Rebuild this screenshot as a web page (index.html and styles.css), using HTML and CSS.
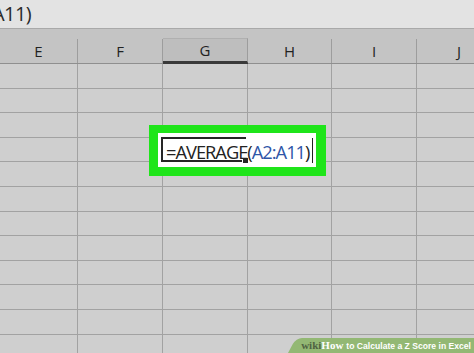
FILE: index.html
```html
<!DOCTYPE html>
<html>
	<head>
		<title>Calculate a Z Score in Excel</title>
		<link rel="stylesheet" href="styles.css">
	</head>
	<body>
		<div class="formula-bar"><span class="formula-text">A11)</span></div>

		<div class="sheet">
			<div class="col-head"><span>E</span></div>
			<div class="col-head"><span>F</span></div>
			<div class="col-head active"><span>G</span></div>
			<div class="col-head"><span>H</span></div>
			<div class="col-head"><span>I</span></div>
			<div class="col-head last"><span>J</span></div>
		</div>
		<div class="sheet rows" id="rows"></div>

		<div class="highlight">
			<div class="cell-outline"><i class="fill-handle"></i></div>
			<span class="entry">=AVERAGE(<span class="ref">A2:A11</span>)</span>
			<i class="caret"></i>
		</div>

		<div class="watermark">
			<div class="watermark-bg"></div>
			<span class="wh-wiki">wiki</span><span class="wh-how">How</span>
			<span class="wh-title">to Calculate a Z Score in Excel</span>
		</div>

		<script>
			var rows = document.getElementById("rows");
			for (var i = 0; i < 12 * 6; i++) {
				var cell = document.createElement("div");
				cell.className = "cell";
				rows.appendChild(cell);
			}
		</script>
	</body>
</html>
```

FILE: styles.css
```css
body {
	margin: 0;
	width: 474px;
	height: 353px;
	overflow: hidden;
	position: relative;
	background: #cfcfcf;
	font-family: "Open Sans", "Liberation Sans", sans-serif;
}

.formula-bar {
	height: 28px;
	background: #e3e3e3;
	border-bottom: 1px solid #a9a9a9;
	overflow: hidden;
}
.formula-text {
	display: block;
	margin-left: -8px;
	padding-top: 0;
	font-size: 20px;
	color: #2a2a2a;
	letter-spacing: -0.6px;
}

.sheet {
	display: grid;
	grid-template-columns: 78px 85px 85px 84px 85px 1fr;
}

.col-head {
	height: 35px;
	box-sizing: border-box;
	padding-top: 10px;
	background: #c4c4c4;
	border-bottom: 1px solid #8f8f8f;
}
.col-head > span {
	display: flex;
	align-items: center;
	justify-content: center;
	height: 24px;
	box-sizing: border-box;
	border-right: 1px solid #9d9d9d;
	font-size: 15px;
	color: #222;
}
.col-head.last > span {
	border-right: none;
	justify-content: flex-end;
	padding-right: 13px;
}
.col-head.active > span {
	background: #bebebe;
	border-top: 1px solid #b0b0b0;
	border-bottom: 2px solid #3a3a3a;
	height: 25px;
	margin-top: -1px;
}
.col-head.active {
	border-bottom-color: #3a3a3a;
}

.rows {
	grid-auto-rows: 24.6px;
}
.cell {
	box-sizing: border-box;
	border-right: 1px solid #a2a2a2;
	border-bottom: 1px solid #a2a2a2;
}
.cell:nth-child(6n) {
	border-right: none;
}

.highlight {
	position: absolute;
	left: 149px;
	top: 125px;
	width: 158px;
	height: 34px;
	border: 9px solid #1fe51a;
	border-top-width: 8px;
	border-right-width: 10px;
	background: #fff;
	display: flex;
	align-items: center;
}
.cell-outline {
	position: absolute;
	left: 3px;
	top: 4px;
	width: 83px;
	height: 21px;
	border: 2px solid #262626;
	border-right: none;
}
.fill-handle {
	position: absolute;
	right: -3px;
	bottom: -4px;
	width: 5px;
	height: 5px;
	background: #262626;
	border: 1px solid #fff;
}
.entry {
	position: relative;
	margin-left: 8px;
	margin-top: 2px;
	font-size: 18.3px;
	letter-spacing: -1px;
	color: #232323;
	white-space: nowrap;
}
.ref {
	color: #2f56a8;
}
.caret {
	position: relative;
	margin-left: 3px;
	margin-top: 1px;
	width: 1px;
	height: 25px;
	background: #222;
}

.watermark {
	position: absolute;
	right: 0;
	bottom: 0;
	height: 15px;
	display: flex;
	align-items: baseline;
	padding: 0 3px 0 17px;
	line-height: 15px;
	white-space: nowrap;
}
.watermark-bg {
	position: absolute;
	left: 4px;
	right: -10px;
	top: 0;
	bottom: 0;
	background: #93b874;
	border-top-left-radius: 6px;
	transform: skewX(-28deg);
	transform-origin: bottom left;
}
.wh-wiki,
.wh-how,
.wh-title {
	position: relative;
	font-weight: bold;
}
.wh-wiki,
.wh-how {
	font-family: "Liberation Serif", serif;
	font-size: 11px;
}
.wh-wiki {
	color: #4f6342;
}
.wh-how {
	color: #fff;
	margin-right: 3px;
}
.wh-title {
	font-family: "Liberation Sans", sans-serif;
	font-size: 8.6px;
	color: #fff;
}
```
